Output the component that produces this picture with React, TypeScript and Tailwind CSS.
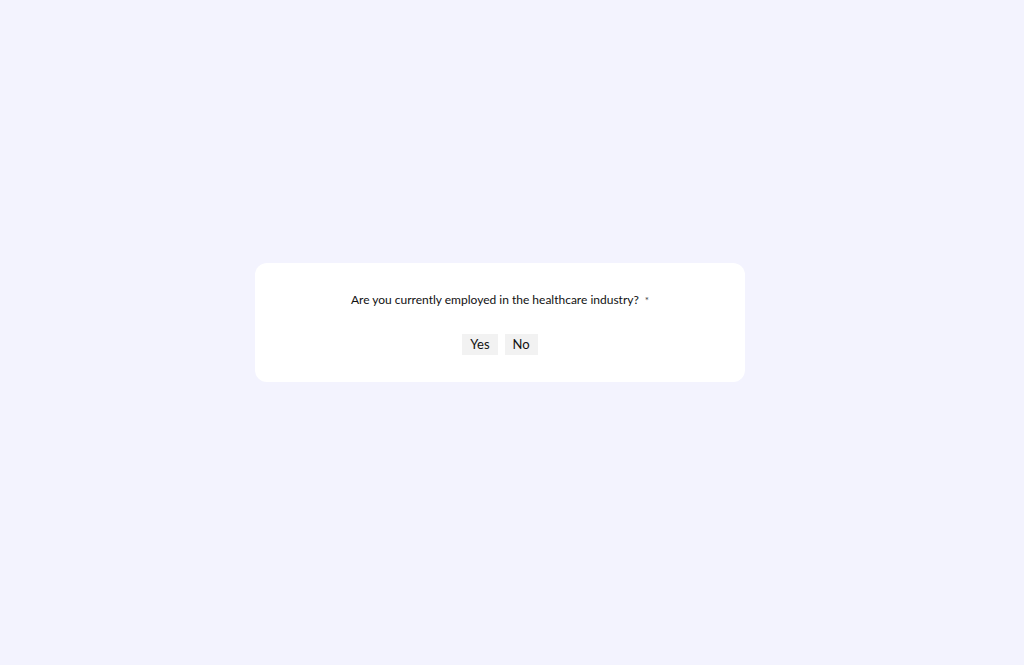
export default function App() {
  return (
    <div
      className="min-h-screen w-full bg-[#f3f3fe] flex items-center justify-center"
      style={{ fontFamily: "Lato, 'Noto Sans', sans-serif" }}
    >
      <div className="w-[490px] h-[119px] bg-white rounded-xl flex flex-col items-center pt-[28px] mt-[-20px] ml-[-24px]">
        <div className="text-[12px] text-[#111] leading-[18px] flex items-start">
          <span>Are you currently employed in the healthcare industry?</span>
          <span className="ml-[6px] text-[10px] text-[#444]">*</span>
        </div>
        <div className="flex gap-[7px] mt-[25px]">
          <button className="h-[21px] px-[8px] bg-[#f2f2f2] text-[13px] text-[#111] leading-none">
            Yes
          </button>
          <button className="h-[21px] px-[8px] bg-[#f2f2f2] text-[13px] text-[#111] leading-none">
            No
          </button>
        </div>
      </div>
    </div>
  );
}
